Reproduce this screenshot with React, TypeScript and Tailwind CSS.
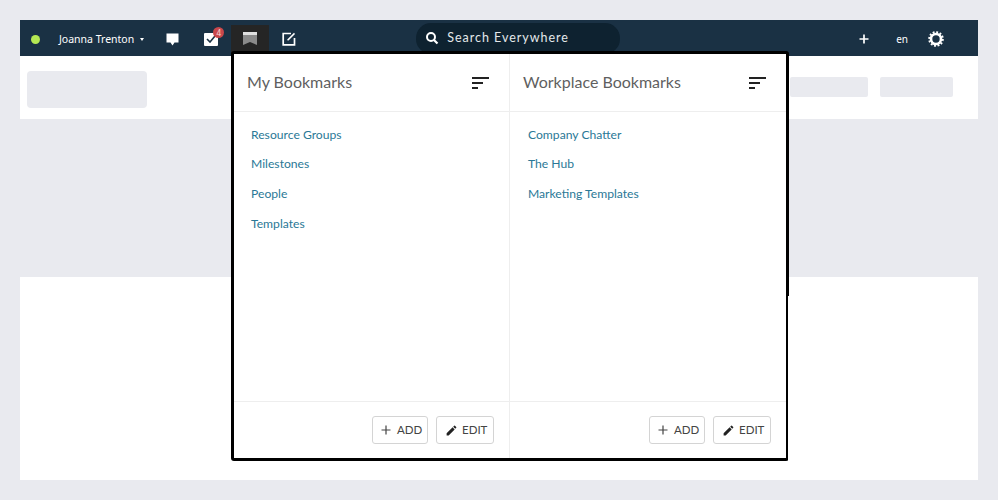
import React from "react";

const Sort = () => (
  <svg width="17" height="12" viewBox="0 0 17 12" className="block">
    <rect x="0" y="0" width="17" height="2" fill="#222" />
    <rect x="0" y="5" width="11" height="2" fill="#222" />
    <rect x="0" y="10" width="6" height="2" fill="#222" />
  </svg>
);

const Pencil = () => (
  <svg width="13" height="13" viewBox="0 0 24 24" fill="#222" className="block">
    <path d="M3 17.25V21h3.75L17.81 9.94l-3.75-3.75L3 17.25zM20.71 7.04a1 1 0 0 0 0-1.41l-2.34-2.34a1 1 0 0 0-1.41 0l-1.83 1.83 3.75 3.75 1.83-1.83z" />
  </svg>
);

const Plus = () => (
  <svg width="10" height="10" viewBox="0 0 10 10" className="block">
    <path d="M5 0.5v9M0.5 5h9" stroke="#444" strokeWidth="1.2" />
  </svg>
);

function Panel({ title, links, first }: { title: string; links: string[]; first?: boolean }) {
  return (
    <div className={`flex flex-col h-full ${first ? "w-[276px] border-r border-[#eeeeee]" : "flex-1"}`}>
      <div className="h-[58px] shrink-0 flex items-center justify-between pl-[13px] pr-[20px] border-b border-[#eeeeee]">
        <span className="text-[16px] leading-[24px] text-[#5f5f5f] -mt-[2px]">{title}</span>
        <Sort />
      </div>
      <div className={`flex-1 flex flex-col gap-[11.7px] pt-[13.7px] ${first ? "pl-[17px]" : "pl-[18px]"}`}>
        {links.map((l) => (
          <span key={l} className="text-[12.15px] leading-[18px] text-[#2a7896]">{l}</span>
        ))}
      </div>
      <div className="h-[57px] shrink-0 border-t border-[#eeeeee] flex justify-end items-center gap-[8px] pr-[15px]">
        <button className="h-[28px] w-[56px] flex items-center gap-[6px] pl-[8px] border border-[#d4d4d4] rounded-[3px] bg-white text-[11.5px] text-[#444]">
          <Plus />
          ADD
        </button>
        <button className="h-[28px] w-[58px] flex items-center gap-[4px] pl-[8px] border border-[#d4d4d4] rounded-[3px] bg-white text-[11.5px] text-[#444]">
          <Pencil />
          EDIT
        </button>
      </div>
    </div>
  );
}

export default function App() {
  return (
    <div className="w-[998px] h-[500px] overflow-hidden bg-[#e9eaef] p-[20px] font-['Lato',sans-serif]">
      <div className="relative w-[958px] h-[460px] flex flex-col">
        <header className="h-[36px] shrink-0 bg-[#1a3144] flex items-center text-white font-['Noto_Sans',sans-serif] pt-[2px]">
          <span className="ml-[11px] w-[9px] h-[9px] rounded-full bg-[#b5e853]" />
          <span className="ml-[19px] text-[10.5px] leading-none">Joanna Trenton</span>
          <span className="ml-[6px] w-0 h-0 border-x-[2.5px] border-x-transparent border-t-[3px] border-t-white" />
          <svg className="ml-[22px]" width="13" height="13" viewBox="0 0 13 13">
            <path d="M0.5 0.5h12v9h-4l-2 3-2-3h-4z" fill="#fff" />
          </svg>
          <span className="relative ml-[25px] w-[14px] h-[13px] bg-white rounded-[1px] flex items-center justify-center">
            <svg width="10" height="8" viewBox="0 0 10 8">
              <path d="M1 4l3 3 5-6" stroke="#1a3144" strokeWidth="1.6" fill="none" />
            </svg>
            <span className="absolute -top-[6px] -right-[6px] w-[11px] h-[11px] rounded-full bg-[#c9474b] text-[8px] leading-[11px] text-center text-white/80">4</span>
          </span>
          <span className="ml-[13px] w-[38px] h-[31px] bg-[#252525] flex items-start justify-center pt-[7px] self-end">
            <svg width="14" height="13" viewBox="0 0 14 13">
              <path d="M0 0h14v3H0z" fill="#e0e0e0" />
              <path d="M0 3h14v10l-7-3-7 3z" fill="#8a8a8a" />
            </svg>
          </span>
          <svg className="ml-[13px]" width="14" height="14" viewBox="0 0 14 14">
            <path d="M9 1.5H1.2v11.3h11.3V6" stroke="#fff" strokeWidth="1.7" fill="none" />
            <path d="M5.5 8.5l1 0L13 2l-1-1.2L5.5 7.3z" fill="#fff" />
          </svg>
          <div className="ml-[120px] w-[204px] h-[31px] rounded-[15px] bg-[#0e2230] flex items-center pl-[9px] -mt-[2px]">
            <svg width="14" height="14" viewBox="0 0 14 14">
              <circle cx="6" cy="6" r="4" stroke="#fff" strokeWidth="2" fill="none" />
              <path d="M9 9l3.5 3.5" stroke="#fff" strokeWidth="2.2" />
            </svg>
            <span className="ml-[8px] mt-[1px] text-[12.5px] tracking-[0.98px] text-[#e4e8ea] font-['Lato',sans-serif]">Search Everywhere</span>
          </div>
          <svg className="ml-[239px]" width="10" height="10" viewBox="0 0 10 10">
            <path d="M5 0.5v9M0.5 5h9" stroke="#fff" strokeWidth="1.7" />
          </svg>
          <span className="ml-[27px] text-[10px] leading-none">en</span>
          <svg className="ml-[20px]" width="16" height="16" viewBox="0 0 16 16">
            <circle cx="8" cy="8" r="5" stroke="#fff" strokeWidth="2.6" fill="none" />
            <circle cx="8" cy="8" r="6.8" stroke="#fff" strokeWidth="2" strokeDasharray="1.9 1.66" fill="none" />
          </svg>
        </header>
        <div className="h-[63px] shrink-0 bg-white flex justify-between pl-[7px] pr-[25px]">
          <div className="mt-[15px] w-[120px] h-[37px] rounded-[4px] bg-[#e9eaef]" />
          <div className="mt-[21px] flex gap-[12px]">
            <div className="w-[78px] h-[20px] rounded-[2px] bg-[#e9eaef]" />
            <div className="w-[73px] h-[20px] rounded-[2px] bg-[#e9eaef]" />
          </div>
        </div>
        <div className="h-[158px] shrink-0" />
        <div className="flex-1 bg-white" />

        <div className="absolute left-[211px] top-[31px] w-[558px] h-[410px] border-[3px] border-black rounded-[3px] bg-white flex">
          <Panel first title="My Bookmarks" links={["Resource Groups", "Milestones", "People", "Templates"]} />
          <Panel title="Workplace Bookmarks" links={["Company Chatter", "The Hub", "Marketing Templates"]} />
        </div>
        <div className="absolute left-[768px] top-[276px] w-[1px] h-[165px] bg-white" />
      </div>
    </div>
  );
}
